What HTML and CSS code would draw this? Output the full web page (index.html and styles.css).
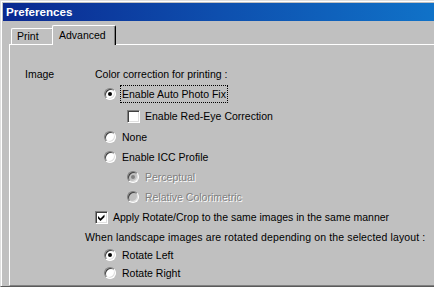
FILE: index.html
```html
<!DOCTYPE html>
<html>
<head>
<meta charset="utf-8">
<link rel="stylesheet" href="styles.css">
</head>
<body>
<div class="window">
  <div class="frame">
    <div class="titlebar">Preferences</div>
    <div class="dialog">
      <div class="tabs">
        <div class="tab">Print</div>
        <div class="tab active">Advanced</div>
      </div>
      <div class="panel">
        <div class="label">Image</div>
        <div class="content">
          <div class="row ind1">Color correction for printing :</div>
          <div class="row ind2"><span class="radio checked"></span><span class="text focus">Enable Auto Photo Fix</span></div>
          <div class="row ind3 gap2"><span class="check"></span><span class="text">Enable Red-Eye Correction</span></div>
          <div class="row ind2 gap1"><span class="radio"></span><span class="text">None</span></div>
          <div class="row ind2"><span class="radio"></span><span class="text">Enable ICC Profile</span></div>
          <div class="row ind3 disabled"><span class="radio checked"></span><span class="text">Perceptual</span></div>
          <div class="row ind3 disabled"><span class="radio"></span><span class="text">Relative Colorimetric</span></div>
          <div class="row ind1"><span class="check"><svg width="11" height="11" viewBox="0 0 11 11"><path d="M2 4 L4.5 6.5 L8.5 2.5 L8.5 5 L4.5 9 L2 6.5 Z" fill="#000"/></svg></span><span class="text">Apply Rotate/Crop to the same images in the same manner</span></div>
          <div class="row note">When landscape images are rotated depending on the selected layout :</div>
          <div class="row ind2 short"><span class="radio checked"></span><span class="text">Rotate Left</span></div>
          <div class="row ind2 short"><span class="radio"></span><span class="text">Rotate Right</span></div>
        </div>
      </div>
    </div>
  </div>
</div>
</body>
</html>
```
FILE: styles.css
```css
html, body {
  margin: 0;
  height: 100%;
  overflow: hidden;
}
body {
  background: #c0c0c0;
  font-family: "Liberation Sans", Arial, sans-serif;
  font-size: 10.5px;
  color: #000;
}
.window {
  box-sizing: border-box;
  height: 287px;
  border-top: 1px solid #dfdfdf;
  border-left: 1px solid #dfdfdf;
  border-bottom: 1px solid #5a5a5a;
  display: flex;
  flex-direction: column;
}
.frame {
  flex: 1;
  border-top: 1px solid #fff;
  border-left: 1px solid #fff;
  padding: 1px 0 0 1px;
  display: flex;
  flex-direction: column;
}
.titlebar {
  height: 18px;
  line-height: 18px;
  padding-left: 3px;
  background: linear-gradient(90deg, #0a2890 0%, #0e4fae 50%, #1072c8 100%);
  color: #fff;
  font-weight: bold;
  font-size: 11.6px;
  white-space: nowrap;
}
.dialog {
  flex: 1;
  padding: 4px 0 0 6px;
  display: flex;
  flex-direction: column;
}
.tabs {
  display: flex;
  align-items: flex-end;
  height: 19px;
  padding-left: 2px;
}
.tab {
  box-sizing: border-box;
  height: 16px;
  width: 43px;
  border-top: 1px solid #fff;
  border-left: 1px solid #fff;
  border-right: 1px solid #000;
  box-shadow: inset -1px 0 0 #808080;
  border-radius: 2px 2px 0 0;
  padding-left: 5px;
  line-height: 15px;
  white-space: nowrap;
}
.tab.active {
  height: 20px;
  width: 64px;
  margin-left: -2px;
  margin-bottom: -1px;
  position: relative;
  z-index: 1;
  background: #c0c0c0;
  padding-left: 6px;
  line-height: 18px;
}
.panel {
  flex: 1;
  border-top: 1px solid #fff;
  border-left: 1px solid #fff;
  border-bottom: 1px solid #808080;
  display: flex;
  align-items: flex-start;
  padding: 19px 0 0 15px;
}
.label {
  width: 60px;
  height: 20px;
  display: flex;
  align-items: center;
  flex: none;
}
.content {
  display: flex;
  flex-direction: column;
}
.row {
  height: 20px;
  display: flex;
  align-items: center;
  white-space: nowrap;
}
.ind1 { padding-left: 10px; }
.ind2 { padding-left: 19px; }
.ind3 { padding-left: 42px; }
.gap2 { margin-top: 2px; }
.gap1 { margin-top: 1px; }
.note {
  height: 19px;
  letter-spacing: 0.13px;
}
.short { height: 18px; }
.text {
  border: 1px dotted transparent;
  padding: 0 1px;
  line-height: 16px;
}
.text.focus {
  border-color: #000;
}
.radio {
  box-sizing: border-box;
  width: 12px;
  height: 12px;
  margin-right: 4px;
  border-radius: 50%;
  border: 1px solid;
  border-color: #808080 #fff #fff #808080;
  background: #fff;
  box-shadow: inset 1px 1px 0 #404040, inset -1px -1px 0 #dfdfdf;
  display: flex;
  align-items: center;
  justify-content: center;
  flex: none;
}
.radio.checked::after {
  content: "";
  width: 4px;
  height: 4px;
  border-radius: 50%;
  background: #000;
}
.check {
  box-sizing: border-box;
  width: 13px;
  height: 13px;
  margin-right: 3px;
  border: 1px solid;
  border-color: #808080 #fff #fff #808080;
  background: #fff;
  box-shadow: inset 1px 1px 0 #404040, inset -1px -1px 0 #dfdfdf;
  display: flex;
  flex: none;
}
.check svg {
  display: block;
}
.disabled .radio {
  background: #c0c0c0;
}
.disabled .radio.checked::after {
  background: #808080;
}
.disabled .text {
  color: #808080;
  text-shadow: 1px 1px 0 #fff;
}
```
